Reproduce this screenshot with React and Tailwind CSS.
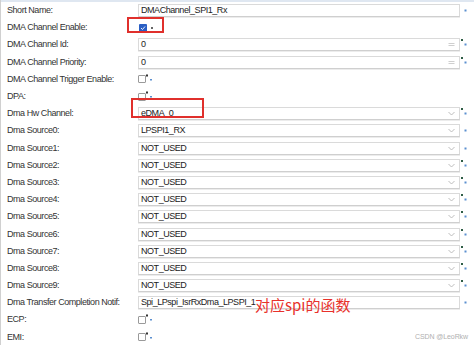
import React from "react";

const rows = [
  { label: "Short Name:", type: "text", value: "DMAChannel_SPI1_Rx", mod: false },
  { label: "DMA Channel Enable:", type: "checked" },
  { label: "DMA Channel Id:", type: "num", value: "0", mod: true },
  { label: "DMA Channel Priority:", type: "num", value: "0", mod: true },
  { label: "DMA Channel Trigger Enable:", type: "check" },
  { label: "DPA:", type: "check" },
  { label: "Dma Hw Channel:", type: "select", value: "eDMA_0", mod: true },
  { label: "Dma Source0:", type: "select", value: "LPSPI1_RX", mod: false },
  { label: "Dma Source1:", type: "select", value: "NOT_USED", mod: false },
  { label: "Dma Source2:", type: "select", value: "NOT_USED", mod: true },
  { label: "Dma Source3:", type: "select", value: "NOT_USED", mod: true },
  { label: "Dma Source4:", type: "select", value: "NOT_USED", mod: true },
  { label: "Dma Source5:", type: "select", value: "NOT_USED", mod: true },
  { label: "Dma Source6:", type: "select", value: "NOT_USED", mod: true },
  { label: "Dma Source7:", type: "select", value: "NOT_USED", mod: true },
  { label: "Dma Source8:", type: "select", value: "NOT_USED", mod: true },
  { label: "Dma Source9:", type: "select", value: "NOT_USED", mod: true },
  { label: "Dma Transfer Completion Notif:", type: "text", value: "Spi_LPspi_IsrRxDma_LPSPI_1", mod: false },
  { label: "ECP:", type: "check" },
  { label: "EMI:", type: "check" },
];

function Marker({ mod }) {
  return (
    <svg width="10" height="17" viewBox="0 0 10 17" className="shrink-0">
      {mod && <rect x="1" y="3" width="2" height="2" fill="#2f5d46" />}
      <rect x="4.5" y="7.5" width="2" height="2" fill="#5b8fd0" />
    </svg>
  );
}

function Chevron() {
  return (
    <svg width="7" height="5" viewBox="0 0 7 5" className="shrink-0">
      <path d="M0.5 1 L3.5 4 L6.5 1" fill="none" stroke="#b5b5b5" strokeWidth="0.9" />
    </svg>
  );
}

function Spin() {
  return (
    <svg width="7" height="5" viewBox="0 0 7 5" className="shrink-0">
      <path d="M0.5 1.5 H6.5 M0.5 3.5 H6.5" stroke="#c9c9c9" strokeWidth="0.9" />
    </svg>
  );
}

function Field({ row }) {
  return (
    <div className="flex items-center">
      <div className="flex h-[13px] w-[322px] items-center justify-between border border-[#dadada] border-b-[#cfcfcf] bg-white pl-[2px] pr-[4px] shadow-[0_1px_0_#ececec]">
        <span className="leading-none text-[#222]">{row.value}</span>
        {row.type === "select" && <Chevron />}
        {row.type === "num" && <Spin />}
      </div>
      <Marker mod={row.mod} />
    </div>
  );
}

function CheckBox() {
  return (
    <div className="flex items-center">
      <div className="h-[8px] w-[8px] rounded-[1px] border border-[#9a9a9a] bg-white" />
      <svg width="10" height="17" viewBox="0 0 10 17" className="shrink-0">
        <rect x="0" y="3.5" width="2" height="2" fill="#333" />
        <rect x="4" y="8" width="2" height="1.5" fill="#5b8fd0" />
      </svg>
    </div>
  );
}

function Checked() {
  return (
    <div className="flex items-center pl-[1px]">
      <div className="flex h-[8px] w-[8px] items-center justify-center rounded-[1px] bg-[#2a5fc4]">
        <svg width="6" height="6" viewBox="0 0 6 6">
          <path d="M1 3 L2.5 4.5 L5 1.5" fill="none" stroke="#fff" strokeWidth="0.9" />
        </svg>
      </div>
      <div className="ml-[4px] h-[1.5px] w-[2px] bg-[#666]" />
    </div>
  );
}

export default function App() {
  return (
    <div
      className="relative h-[345px] w-[474px] overflow-hidden border-l border-[#d0d0d0] bg-white text-[9px] tracking-[-0.45px] text-[#333]"
      style={{ fontFamily: '"Liberation Sans", Arial, sans-serif' }}
    >
      <div className="h-[2px] bg-[#dfe7f1]" />
      <div className="flex flex-col">
        {rows.map((row, i) => (
          <div key={i} className="flex h-[17.2px] items-center pl-[6px]">
            <div className="w-[131px] shrink-0 whitespace-nowrap leading-none">{row.label}</div>
            {(row.type === "text" || row.type === "num" || row.type === "select") && <Field row={row} />}
            {row.type === "check" && <CheckBox />}
            {row.type === "checked" && <Checked />}
          </div>
        ))}
      </div>

      <div className="absolute left-[126px] top-[17px] h-[16px] w-[37px] border-2 border-[#e0302c]" />
      <div className="absolute left-[130px] top-[98px] h-[20px] w-[73px] border-2 border-[#e0302c]" />

      <div
        className="absolute left-[254px] top-[297px] whitespace-nowrap text-[15px] leading-none tracking-normal text-[#e8312b]"
        style={{ fontFamily: '"Noto Sans CJK SC", "Noto Sans", sans-serif' }}
      >
        对应spi的函数
      </div>
      <div className="absolute left-[414px] top-[333px] whitespace-nowrap text-[7px] leading-none tracking-[-0.1px] text-[#b0b0b0]">
        CSDN @LeoRkw
      </div>
    </div>
  );
}
